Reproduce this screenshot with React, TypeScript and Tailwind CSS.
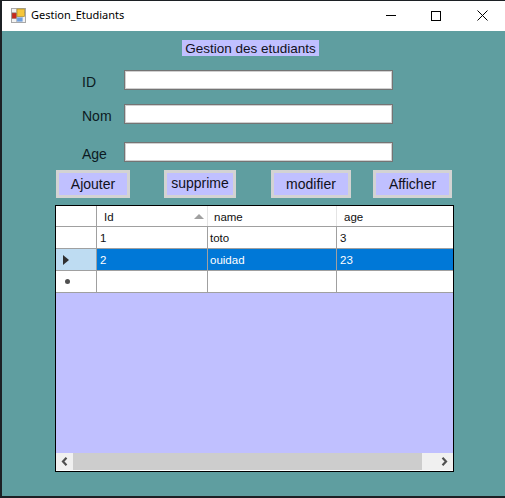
import React from 'react';

const rows = [
  { id: '1', name: 'toto', age: '3', selected: false },
  { id: '2', name: 'ouidad', age: '23', selected: true },
  { id: '', name: '', age: '', selected: false, isNew: true },
];

function AppIcon() {
  return (
    <svg width="15" height="15" viewBox="0 0 15 15" className="shrink-0">
      <rect x="0.5" y="0.5" width="14" height="14" fill="#f2f2f2" stroke="#a8a8a8" />
      <path d="M5.5 1V14M1 4.5H14" stroke="#c4c4c4" strokeWidth="1" />
      <rect x="1" y="5" width="4.5" height="5.5" fill="#c8281c" stroke="#8c6a60" strokeWidth="0.5" />
      <rect x="6" y="1" width="7.5" height="7.5" fill="#f6c63a" stroke="#a88a2a" strokeWidth="0.7" />
      <rect x="6" y="9.5" width="5.5" height="4" fill="#6c9fe0" stroke="#9ab4d8" strokeWidth="0.5" />
    </svg>
  );
}

function Field({ label, className }: { label: string; className: string }) {
  return (
    <div className={`flex items-center pl-[80px] ${className}`}>
      <span className="w-[42px] pt-[3px] text-[14px] text-[#0c1a22] leading-none">{label}</span>
      <div className="w-[269px] h-[20px] bg-white border border-[#747474] shadow-[inset_0_0_0_1px_#d0d0d0]" />
    </div>
  );
}

function FormButton({ label, className }: { label: string; className: string }) {
  return (
    <button className={`h-[28px] bg-[#c0c0ff] border-[3px] border-[#d3d3d3] text-[14px] text-[#101020] ${className}`}>
      {label}
    </button>
  );
}

export default function App() {
  return (
    <div
      className="w-[505px] h-[498px] overflow-hidden bg-[#1c2024] pt-px pl-[2px] pb-[2px] flex flex-col"
      style={{ fontFamily: '"Liberation Sans", Arial, sans-serif' }}
    >
      {/* title bar */}
      <div className="h-[30px] shrink-0 bg-white flex items-center pl-[9px] pb-px">
        <AppIcon />
        <span className="ml-[5px] text-[11px] text-black" style={{ fontFamily: '"Noto Sans", sans-serif' }}>
          Gestion_Etudiants
        </span>
        <div className="ml-auto flex items-center">
          <div className="w-[45px] flex justify-center">
            <div className="w-[10px] h-px bg-black" />
          </div>
          <div className="w-[46px] flex justify-center">
            <div className="w-[10px] h-[10px] border border-black" />
          </div>
          <div className="w-[46px] flex justify-center">
            <svg width="11" height="11" viewBox="0 0 11 11">
              <path d="M0.5 0.5L10.5 10.5M10.5 0.5L0.5 10.5" stroke="#000" strokeWidth="1" />
            </svg>
          </div>
        </div>
      </div>

      {/* form */}
      <div className="flex-1 bg-[#5f9ea0] flex flex-col min-h-0">
        <div className="flex justify-center pt-[9px] pr-[6px]">
          <span className="h-[16px] w-[137px] bg-[#c0c0ff] text-[13.5px] leading-[17px] text-center text-[#101020]">
            Gestion des etudiants
          </span>
        </div>
        <Field label="ID" className="mt-[14px]" />
        <Field label="Nom" className="mt-[14px]" />
        <Field label="Age" className="mt-[18px]" />

        <div className="flex mt-[8px] pl-[54px]">
          <FormButton label="Ajouter" className="w-[74px]" />
          <FormButton label="supprime" className="w-[72px] ml-[34px] pb-[4px]" />
          <FormButton label="modifier" className="w-[80px] ml-[35px]" />
          <FormButton label="Afficher" className="w-[79px] ml-[22px]" />
        </div>

        {/* data grid */}
        <div className="mt-[7px] ml-[53px] w-[399px] h-[267px] border border-black bg-[#c0c0ff] flex flex-col">
          <div className="flex h-[21px] bg-white border-b border-[#a0a0a0] text-[11.5px] text-[#101010] shrink-0">
            <div className="w-[41px] border-r border-[#a0a0a0]" />
            <div className="w-[111px] border-r border-[#e4e4e4] pl-[7px] relative leading-[22px]">
              Id
              <svg width="10" height="5" viewBox="0 0 10 5" className="absolute right-[3px] top-[8px]">
                <path d="M0 5L5 0L10 5Z" fill="#a0a0a0" />
              </svg>
            </div>
            <div className="w-[129px] border-r border-[#e4e4e4] pl-[6px] leading-[22px]">name</div>
            <div className="flex-1 pl-[7px] leading-[22px]">age</div>
          </div>
          {rows.map((row) => (
            <div
              key={row.id || 'new'}
              className={`flex h-[22px] shrink-0 border-b border-[#a0a0a0] text-[11.5px] leading-[23px] ${
                row.selected ? 'bg-[#0078d7] text-white' : 'bg-white text-[#101010]'
              }`}
            >
              <div
                className={`w-[41px] border-r border-[#a0a0a0] flex items-center pl-[7px] ${
                  row.selected ? 'bg-[#bedcf2]' : 'bg-white'
                }`}
              >
                {row.selected && (
                  <svg width="6" height="10" viewBox="0 0 6 10">
                    <path d="M0 0L6 5L0 10Z" fill="#303030" />
                  </svg>
                )}
                {row.isNew && <div className="ml-[2px] w-[5px] h-[5px] rounded-full bg-[#505050]" />}
              </div>
              <div className="w-[111px] border-r border-[#a0a0a0] pl-[3px]">{row.id}</div>
              <div className="w-[129px] border-r border-[#a0a0a0] pl-[2px]">{row.name}</div>
              <div className="flex-1 pl-[3px]">{row.age}</div>
            </div>
          ))}
          <div className="flex-1" />
          <div className="h-[18px] shrink-0 bg-[#f0f0f0] border-b border-white flex items-center">
            <div className="w-[17px] flex justify-center">
              <svg width="7" height="9" viewBox="0 0 7 9">
                <path d="M5.5 0.8L2 4.5L5.5 8.2" fill="none" stroke="#505050" strokeWidth="2.2" />
              </svg>
            </div>
            <div className="w-[349px] h-full bg-[#cdcdcd]" />
            <div className="flex-1 flex pl-[19px]">
              <svg width="7" height="9" viewBox="0 0 7 9">
                <path d="M1.5 0.8L5 4.5L1.5 8.2" fill="none" stroke="#505050" strokeWidth="2.2" />
              </svg>
            </div>
          </div>
        </div>
      </div>
    </div>
  );
}
